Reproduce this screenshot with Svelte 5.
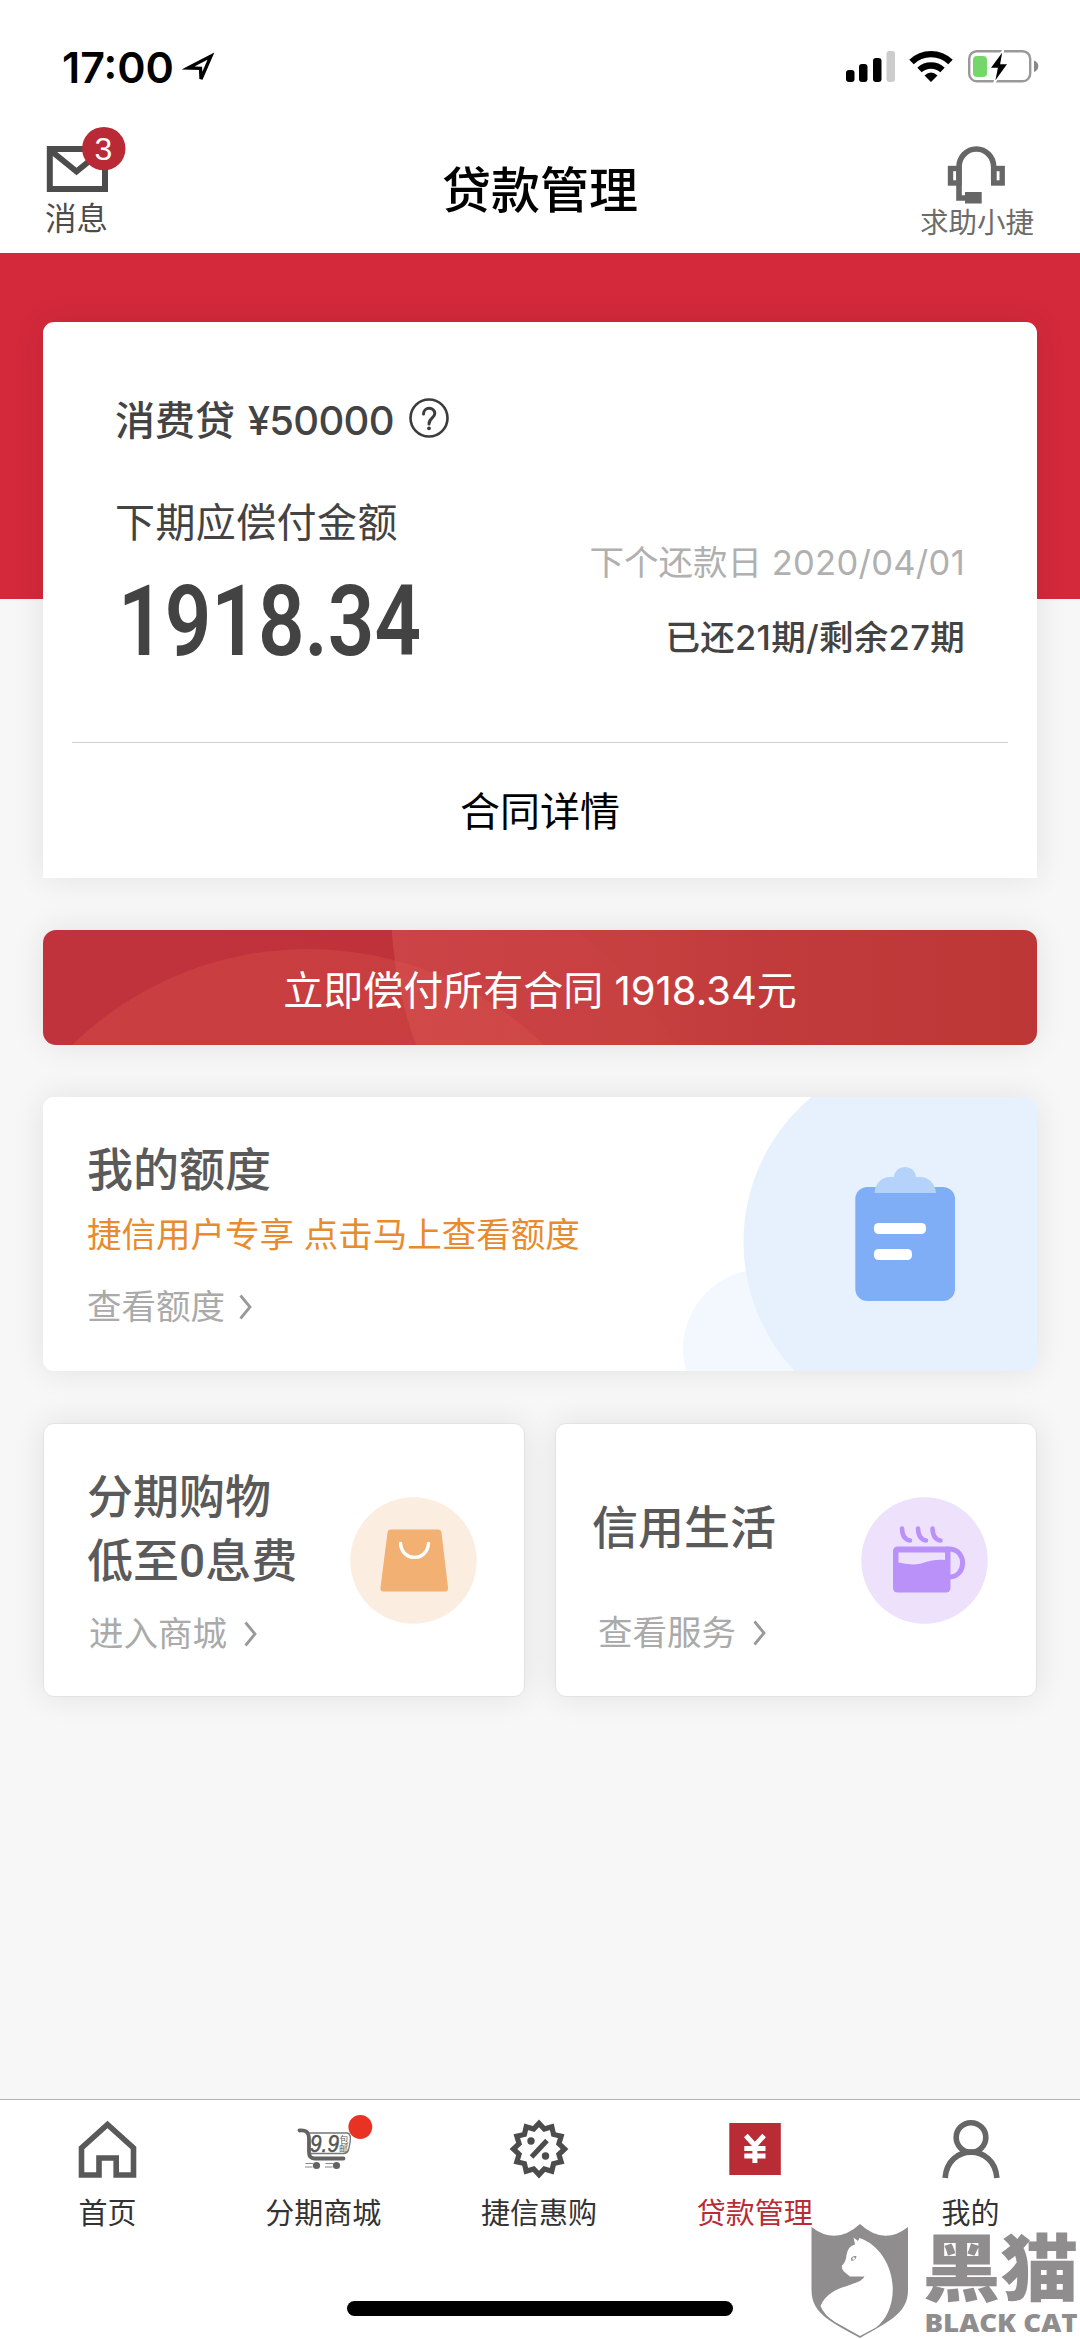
<script>
  // Twelve-pointed outline of the discount badge in the tab bar
  const badgePoints = Array.from({ length: 24 }, (_, i) => {
    const r = i % 2 === 0 ? 25.6 : 20.6;
    const a = (i * Math.PI) / 12;
    return `${(540 + r * Math.cos(a)).toFixed(2)},${(2149 + r * Math.sin(a)).toFixed(2)}`;
  }).join(' ');
</script>

<div class="screen">
  <header>
    <div class="status">
      <span class="time">17:00</span>
      <svg class="loc" width="34" height="34" viewBox="184 52 34 34">
        <path d="M189 69 L212 57 L202 80 L201.500 69.400 Z" fill="none" stroke="#000" stroke-width="3.300" stroke-linejoin="miter" />
      </svg>
      <svg class="sys" width="200" height="36" viewBox="844 48 200 36">
        <rect x="846" y="70" width="8.500" height="12" rx="3" />
        <rect x="859" y="64" width="8.500" height="18" rx="3" />
        <rect x="873" y="58" width="8.500" height="24" rx="3" />
        <rect x="886.500" y="51" width="8.500" height="31" rx="3" fill="#ccc" />
        <g fill="none" stroke="#000" stroke-width="6.400">
          <path d="M911.500 62 A 28 28 0 0 1 950.500 62" />
          <path d="M919.500 70 A 16.800 16.800 0 0 1 942.500 70" />
        </g>
        <path d="M931 82 L924.500 75.500 Q931 69.500 937.500 75.500 Z" />
        <rect x="969.200" y="51.200" width="61" height="30" rx="7.500" fill="none" stroke="#999" stroke-width="2.400" />
        <path d="M1034 60.500 Q1038.300 62 1038.300 66 Q1038.300 70.500 1034 72 Z" fill="#888" />
        <rect x="973" y="56" width="14" height="21" rx="4" fill="#75d66c" />
        <path d="M1003.500 49.500 L989.500 68.500 H997 L994 83.500 L1008.500 63.500 H1001 Z" fill="#000" stroke="#fff" stroke-width="1.500" />
      </svg>
    </div>
    <nav>
      <div class="nav-item left">
        <svg width="82" height="67" viewBox="45 127 82 67">
          <path d="M49.800 149 H105 V189 H49.800 Z" fill="none" stroke="#4c4c4c" stroke-width="6" />
          <path d="M50 150 L76.500 171.500 L103 150" fill="none" stroke="#4c4c4c" stroke-width="6" />
          <circle cx="103.800" cy="148.600" r="21.700" fill="#b92a36" />
          <text x="103.500" y="159.800" text-anchor="middle" class="badge-num">3</text>
        </svg>
        <span class="msg">消息</span>
      </div>
      <h1>贷款管理</h1>
      <div class="nav-item right">
        <svg width="61" height="58" viewBox="946 146 61 58" fill="none" stroke="#666">
          <path d="M959 168 V198 H966 M959 180 V167 A17.300 18 0 0 1 993.700 167 V180" stroke-width="5.600" />
          <rect x="950.500" y="168.500" width="8.500" height="14.500" stroke-width="5.400" />
          <rect x="993.700" y="168.500" width="8.500" height="14.500" stroke-width="5.400" />
          <rect x="965" y="192" width="16.700" height="11.500" fill="#666" stroke="none" />
        </svg>
        <span class="help">求助小捷</span>
      </div>
    </nav>
  </header>

  <main>
    <section class="loan">
      <div class="loan-title">
        <span>消费贷 <b>¥50000</b></span>
        <svg width="42" height="42" viewBox="0 0 42 42" fill="none" stroke="#3c3c3c">
          <circle cx="21" cy="21" r="18.500" stroke-width="2.600" />
          <path d="M15.500 17 C15.500 9.500 26.800 9.500 26.800 16.500 C26.800 21 21 21 21 27" stroke-width="3" stroke-linecap="round" />
          <circle cx="21" cy="31.300" r="1.900" fill="#3c3c3c" stroke="none" />
        </svg>
      </div>
      <div class="loan-body">
        <div class="due">
          <p>下期应偿付金额</p>
          <strong>1918.34</strong>
        </div>
        <div class="plan">
          <p class="date">下个还款日 <span>2020/04/01</span></p>
          <p class="terms">已还21期/剩余27期</p>
        </div>
      </div>
      <div class="detail">合同详情</div>
    </section>

    <button class="pay">
      <svg width="994" height="115" viewBox="43 930 994 115">
        <defs>
          <linearGradient id="arc" x1="0" x2="1"><stop offset="0" stop-color="#dc6058" stop-opacity=".36" /><stop offset=".45" stop-color="#d85a54" stop-opacity=".05" /><stop offset="1" stop-color="#d85a54" stop-opacity="0" /></linearGradient>
          <linearGradient id="hill" x1="0" x2="1"><stop offset="0" stop-color="#d9554a" stop-opacity=".36" /><stop offset="1" stop-color="#d9554a" stop-opacity=".32" /></linearGradient>
        </defs>
        <circle cx="308" cy="1287" r="338" fill="url(#hill)" />
        <circle cx="791" cy="905" r="400" fill="url(#arc)" />
        <path d="M392 930 H575 Q640 975 676 1045 H415 Q393 990 392 930 Z" fill="#e05a5a" opacity=".07" />
      </svg>
      <span>立即偿付所有合同 1918.34元</span>
    </button>

    <section class="quota">
      <svg class="quota-art" width="360" height="274" viewBox="677 1097 360 274">
        <circle cx="763" cy="1349" r="80" fill="#f3f7fe" />
        <circle cx="932" cy="1242" r="188.500" fill="#e6f1fd" />
        <rect x="855.300" y="1187" width="99.700" height="114" rx="12" fill="#7faef7" />
        <path d="M874.500 1193 C875 1184 881 1177 890 1177 H894 C895 1163.500 915 1163.500 916 1177 H920 C929 1177 935.500 1184 936 1193 Z" fill="#b5d2fa" />
        <rect x="874" y="1223" width="52" height="11" rx="4.500" fill="#fff" />
        <rect x="874" y="1249" width="38" height="11" rx="4.500" fill="#fff" />
      </svg>
      <h2>我的额度</h2>
      <p class="promo">捷信用户专享 点击马上查看额度</p>
      <p class="link">查看额度<svg width="16" height="28" viewBox="0 0 16 28"><path d="M2.500 2.500 L12 14 L2.500 25.500" /></svg></p>
    </section>

    <div class="pair">
      <section class="tile shop">
        <div class="tile-text">
          <h2>分期购物<br />低至<span class="zero">0</span>息费</h2>
          <p class="link">进入商城<svg width="16" height="28" viewBox="0 0 16 28"><path d="M2.500 2.500 L12 14 L2.500 25.500" /></svg></p>
        </div>
        <svg width="127" height="127" viewBox="350 1496.500 127 127">
          <circle cx="413.500" cy="1560" r="63.200" fill="#fbeee1" />
          <path d="M391 1529 H438 Q441 1529 441.500 1532 L448 1587 Q448.500 1591 445 1591 H383.500 Q380 1591 380.500 1587 L387.500 1532 Q388 1529 391 1529 Z" fill="#f2b073" />
          <path d="M400.500 1543 C402 1561.500 427 1561.500 428.500 1543" fill="none" stroke="#fff" stroke-width="3.400" stroke-linecap="round" />
        </svg>
      </section>
      <section class="tile life">
        <div class="tile-text">
          <h2>信用生活</h2>
          <p class="link">查看服务<svg width="16" height="28" viewBox="0 0 16 28"><path d="M2.500 2.500 L12 14 L2.500 25.500" /></svg></p>
        </div>
        <svg width="127" height="127" viewBox="861 1496.500 127 127">
          <circle cx="924.500" cy="1560" r="63.200" fill="#ede1fc" />
          <rect x="893" y="1546" width="57.500" height="46" rx="4.500" fill="#b991f8" />
          <path d="M898.500 1552 H945 V1559.500 C929 1558 925 1564 913 1564 Q905 1563.500 898.500 1562 Z" fill="#ede1fc" />
          <path d="M946 1548.500 H949.500 C967 1549 967 1576 949.500 1576.500" fill="none" stroke="#b991f8" stroke-width="5" />
          <path d="M902 1528 Q902.500 1539 910 1540 M918 1528 Q918.500 1539 926 1540 M932.500 1528 Q933 1539 940.500 1540" fill="none" stroke="#b991f8" stroke-width="4.600" stroke-linecap="round" />
        </svg>
      </section>
    </div>
  </main>

  <footer>
    <div class="tabs">
      <div class="tab">
        <svg width="70" height="64" viewBox="73 2117 70 64">
          <path d="M81.500 2175 V2148 L107.500 2124.500 L133.500 2148 V2175 H116.200 V2158 H99 V2175 Z" fill="none" stroke="#595959" stroke-width="5.600" />
        </svg>
        <span>首页</span>
      </div>
      <div class="tab">
        <svg width="100" height="64" viewBox="273.500 2117 100 64">
          <path d="M299 2130.500 C307 2130 308.500 2133 308.500 2140 V2152 Q308.500 2158.500 314 2158.500 H343" fill="none" stroke="#626262" stroke-width="3.800" stroke-linecap="round" />
          <path d="M308.500 2133 H347 Q351 2134 349.500 2143 L348 2150 Q347 2153.500 343 2153.500 H310" fill="none" stroke="#777" stroke-width="1.300" />
          <text x="309.500" y="2151.500" class="cart-price" textLength="29" lengthAdjust="spacingAndGlyphs">9.9</text>
          <text x="339" y="2143" class="cart-post">包</text>
          <text x="338.500" y="2151.500" class="cart-post">邮</text>
          <circle cx="316" cy="2165.500" r="3.600" fill="#626262" />
          <circle cx="336" cy="2165.500" r="3.600" fill="#626262" />
          <path d="M305 2163.500 H313 M304.500 2167 H312 M325 2163.500 H333 M324.500 2167 H332" stroke="#888" stroke-width="1.200" />
          <circle cx="359.800" cy="2127" r="11.900" fill="#e83324" />
        </svg>
        <span>分期商城</span>
      </div>
      <div class="tab">
        <svg width="64" height="64" viewBox="508 2117 64 64">
          <polygon points={badgePoints} fill="none" stroke="#4c4c4c" stroke-width="5.200" />
          <path d="M532.500 2157 L548 2140.500" stroke="#4c4c4c" stroke-width="5" />
          <circle cx="532" cy="2141" r="3.700" fill="#4c4c4c" />
          <circle cx="546.500" cy="2156" r="3.700" fill="#4c4c4c" />
        </svg>
        <span>捷信惠购</span>
      </div>
      <div class="tab active">
        <svg width="64" height="64" viewBox="723.700 2117 64 64">
          <rect x="730" y="2123" width="51.500" height="52" fill="#b92b35" />
          <path d="M746.500 2135.500 L755.600 2145.500 L764.800 2135.500 M755.600 2145 V2163 M745 2148.600 H766.200 M745 2156 H766.200" fill="none" stroke="#fff" stroke-width="5" />
        </svg>
        <span>贷款管理</span>
      </div>
      <div class="tab">
        <svg width="64" height="64" viewBox="939.500 2117 64 64">
          <g fill="none" stroke="#666" stroke-width="5.600">
            <ellipse cx="971.500" cy="2137.500" rx="14.800" ry="14.800" />
            <path d="M945.600 2178 C948 2143.500 995 2143.500 997.400 2178" />
          </g>
        </svg>
        <span>我的</span>
      </div>
    </div>
    <div class="home-bar"></div>
  </footer>

  <svg class="mark" width="272" height="117" viewBox="808 2222 272 117">
    <path d="M811.500 2227 Q836 2246 860 2224 Q884 2246 908 2227 V2290 C908 2315 885 2323 860 2338 C834 2323 811.500 2315 811.500 2290 Z" fill="#8f8d8e" />
    <path d="M853.500 2237.500 L858 2241 L859.500 2238 C878 2244 892 2264 892.800 2288 C893 2306 886 2320 876 2327.500 L860 2336 L835 2322 Q824 2315 820.500 2306 C828 2288 848 2287 860 2281 Q864 2278 864.500 2276.500 H850 L847.500 2274.500 Q841 2270 842 2265.500 Q846 2262 846.500 2255 Q848 2246 855 2244.500 Z" fill="#fff" />
    <path d="M851 2258.500 Q852 2255.500 856.500 2256 Q856 2260.500 851.500 2261 Z" fill="#8f8d8e" />
    <circle cx="853.700" cy="2258.500" r="1.300" fill="#fff" />
    <text x="922.500" y="2294.500" class="mark-cn" textLength="156" lengthAdjust="spacingAndGlyphs">黑猫</text>
    <text x="924.500" y="2332" class="mark-en" textLength="153" lengthAdjust="spacingAndGlyphs">BLACK CAT</text>
  </svg>
</div>

<style>
  :global(body) { margin: 0; }
  .screen {
    position: relative;
    display: flex;
    flex-direction: column;
    width: 1080px;
    height: 2339px;
    overflow: hidden;
    background: #f7f7f7;
    color: #434343;
    font-family: Inter, 'Noto Sans CJK SC', sans-serif;
  }
  svg { display: block; flex: none; overflow: visible; }
  p, h1, h2 { margin: 0; font-weight: 400; }

  header { height: 253px; background: #fff; flex: none; }
  .status { display: flex; height: 100px; box-sizing: border-box; padding: 49px 36px 0 62px; }
  .time { width: 113px; font-size: 43px; font-weight: 600; line-height: 36px; color: #000; white-space: nowrap; }
  .loc { margin: 2px 0 0 8px; }
  .sys { margin: -1px 0 0 auto; }
  nav { display: grid; grid-template-columns: 1fr auto 1fr; height: 153px; }
  .nav-item { display: flex; flex-direction: column; }
  .left { padding: 27px 0 0 45px; align-items: flex-start; }
  .right { padding: 46px 46px 0 0; align-items: center; justify-self: end; }
  .badge-num { font: 400 32px 'Liberation Sans', sans-serif; fill: #fff; }
  .msg { margin-top: 10px; font-size: 31.500px; line-height: 30px; color: #4c4c4c; }
  .help { margin-top: 4px; font-size: 28.500px; line-height: 30px; color: #6c6c6c; }
  h1 { margin-top: 61px; font-size: 49px; line-height: 60px; font-weight: 500; color: #000; }

  main {
    flex: 1;
    padding: 69px 43px 0;
    background: linear-gradient(#d3293b 0 346px, #f7f7f7 346px);
  }
  .loan, .quota, .pay, .tile { box-shadow: 0 0 32px rgba(0, 0, 0, .09); }
  .loan { height: 556px; box-sizing: border-box; background: #fff; border-radius: 11px 11px 0 0; padding: 67px 29px 0; }
  .loan-title { display: flex; align-items: center; gap: 14px; height: 58px; padding: 0 43px; font-size: 40px; font-weight: 500; white-space: nowrap; }
  .loan-title span { margin-top: -1px; }
  .loan-title b { margin-left: 2px; font-weight: 500; letter-spacing: -.7px; }
  .loan-body { display: flex; justify-content: space-between; height: 294px; padding: 0 43px 1px; border-bottom: 1px solid #d0d0d0; }
  .due { padding-top: 51px; }
  .due p { font-size: 40px; line-height: 50px; letter-spacing: .4px; }
  .due strong {
    display: block;
    width: 300px;
    margin: 29px 0 0 3px;
    font: 600 98px/90px Roboto, sans-serif;
    transform: scaleX(.833);
    transform-origin: 0 50%;
  }
  .plan { padding-top: 91px; text-align: right; font-size: 34.500px; line-height: 50px; }
  .date { color: #b0b0b0; }
  .date span { letter-spacing: .3px; }
  .terms { margin-top: 25px; font-weight: 500; letter-spacing: .3px; }
  .detail { text-align: center; font-size: 40px; line-height: 138px; color: #000; }

  .pay {
    position: relative;
    display: block;
    width: 100%;
    height: 115px;
    margin-top: 52px;
    padding: 0;
    border: 0;
    border-radius: 13px;
    overflow: hidden;
    background: linear-gradient(90deg, #c0333d, #c0323a 35%, #c23b3c 60%, #bc3636);
    font: 400 40px Inter, 'Noto Sans CJK SC', sans-serif;
    color: #fff;
  }
  .pay svg { position: absolute; inset: 0; }
  .pay span { position: relative; }

  .quota { position: relative; height: 274px; margin-top: 52px; box-sizing: border-box; padding: 40px 44px 0; background: #fff; border-radius: 11px; overflow: hidden; }
  .quota-art { position: absolute; top: 0; right: 0; }
  h2 { font-size: 46px; line-height: 64px; font-weight: 500; color: #5a5a5a; }
  .zero { font-family: Roboto, sans-serif; }
  .promo { margin-top: 9px; font-size: 34.500px; line-height: 50px; color: #e78b2e; }
  .link { display: flex; align-items: center; font-size: 34.500px; line-height: 50px; color: #aaa; }
  .link svg { margin-left: 13px; }
  .link path { fill: none; stroke: #999; stroke-width: 2.800; }
  .quota .link { margin-top: 22px; }

  .pair { display: flex; justify-content: space-between; margin: 52px 0 0; }
  .tile { display: flex; justify-content: space-between; width: 482px; height: 274px; box-sizing: border-box; border: 1.500px solid #e3e3e3; border-radius: 11px; background: #fff; padding: 0 47px 0 43px; }
  .tile > svg { margin-top: 73px; }
  .tile-text { padding-top: 40px; white-space: nowrap; }
  .tile .link { margin: 16px 0 0 2px; }
  .tile .link svg { margin-left: 16px; }
  .life { padding: 0 48px 0 36px; }
  .life h2 { padding: 31px 0 33px; }
  .life .link { margin-left: 6px; }

  footer { height: 240px; flex: none; box-sizing: border-box; border-top: 1.500px solid #b4b4b4; background: #fff; }
  .tabs { display: flex; padding-top: 17px; height: 184px; }
  .tab { display: flex; flex-direction: column; align-items: center; width: 215.800px; font-size: 29px; line-height: 34px; color: #333; }
  .tab span { margin: 16px 1px 0 0; font-weight: 400; }
  .active { color: #b92b35; }
  .cart-price { font: italic 400 23px 'Liberation Sans', sans-serif; fill: #555; stroke: #555; stroke-width: .5; }
  .cart-post { font: 400 9px 'Noto Sans CJK SC', sans-serif; fill: #555; }
  .home-bar { width: 386px; height: 14.500px; margin: 0 auto; border-radius: 8px; background: #000; }
  .mark { position: absolute; right: 0; bottom: 0; }
  .mark-cn { font: 900 73px 'Noto Sans CJK SC', sans-serif; fill: #8f8d8e; }
  .mark-en { font: 800 24px 'Open Sans', sans-serif; fill: #8f8d8e; }
</style>
